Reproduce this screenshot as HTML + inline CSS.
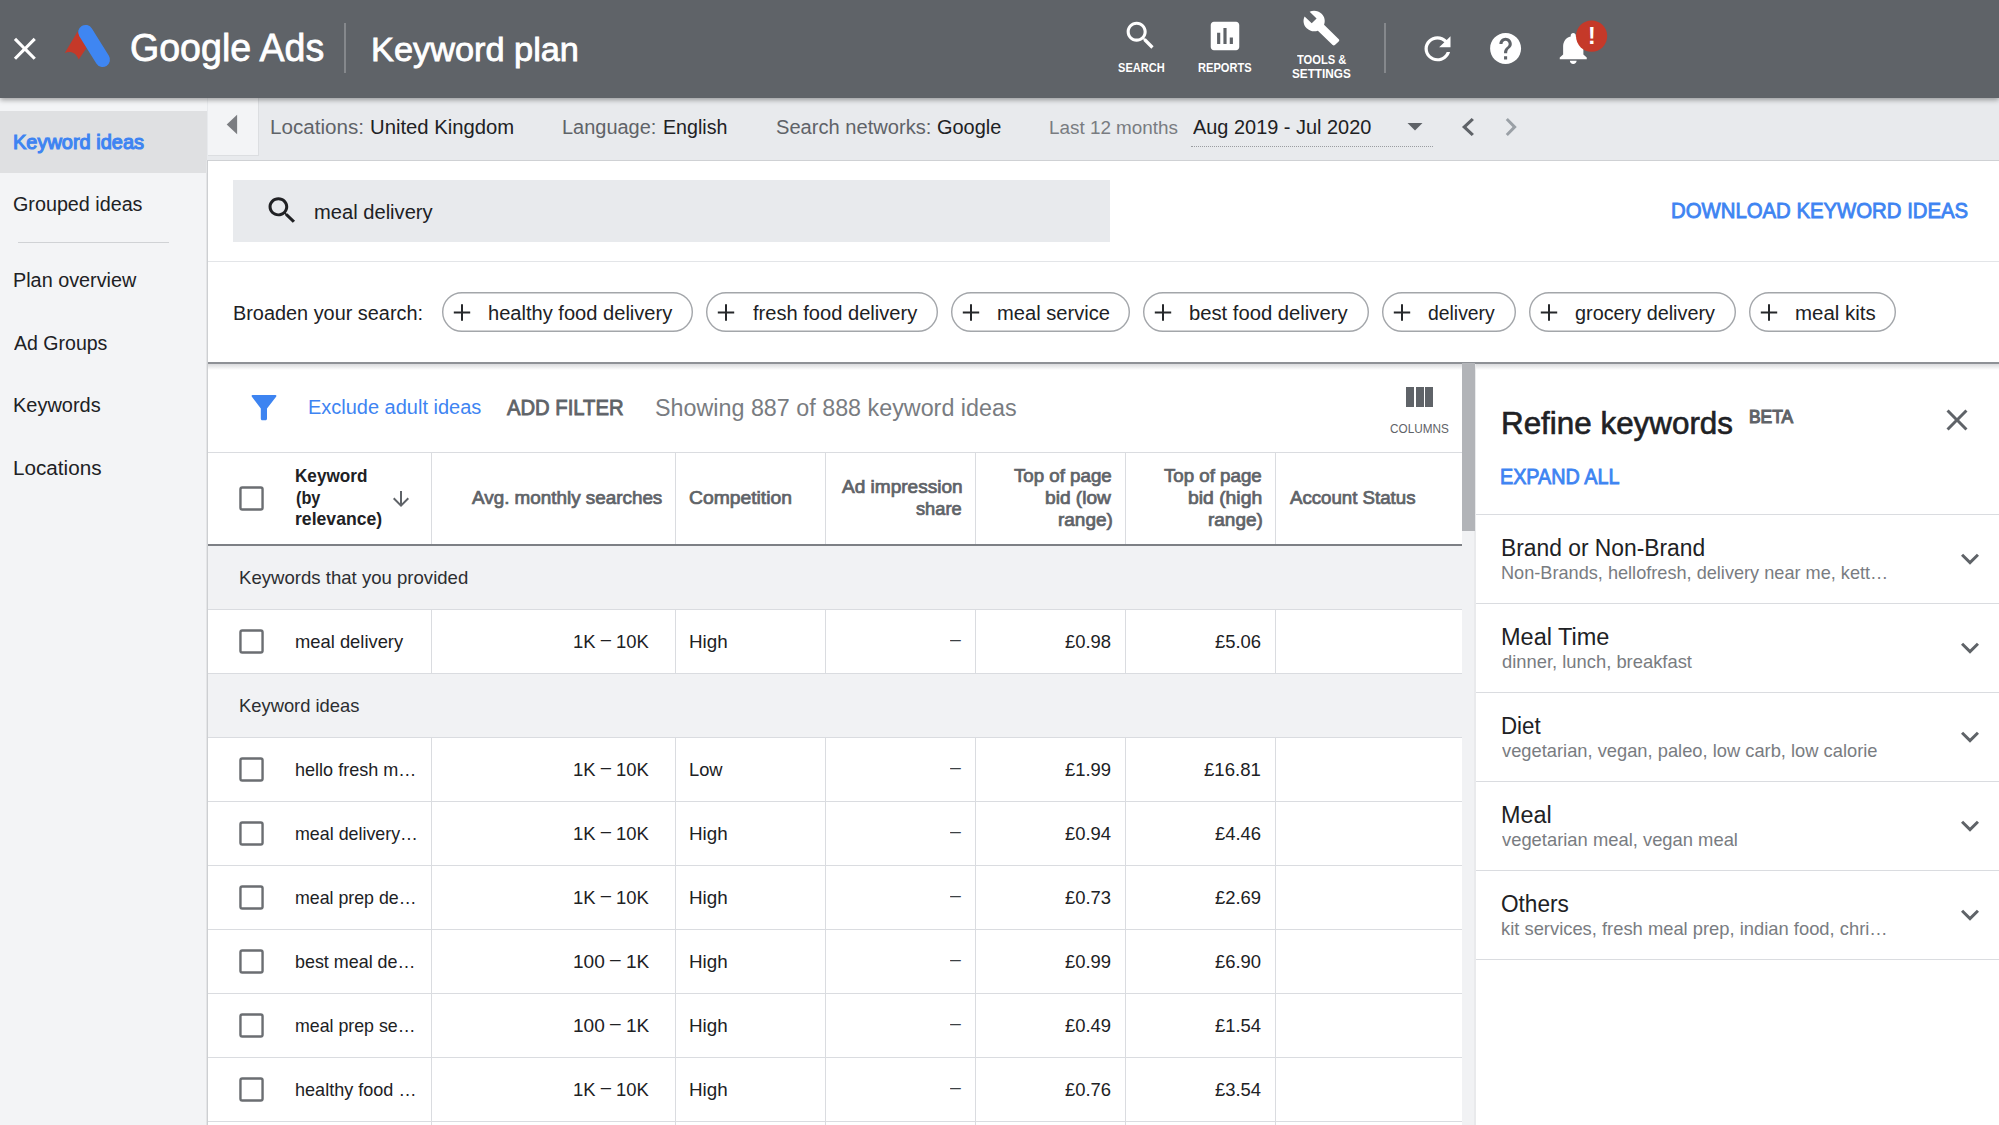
<!DOCTYPE html>
<html lang="en"><head><meta charset="utf-8"><title>Keyword plan - Google Ads</title>
<style>
*{margin:0;padding:0;box-sizing:border-box}
html,body{width:1999px;height:1125px;overflow:hidden;background:#fff}
body{position:relative;font-family:"Liberation Sans", Arial, sans-serif;-webkit-font-smoothing:antialiased}
.b{position:absolute}
.ic{position:absolute;overflow:visible}
.d{position:relative;top:-2.3px}
.t{position:absolute;white-space:nowrap;transform-origin:0 50%;color:#202124}
</style></head>
<body>
<div class="b" style="left:0px;top:0px;width:1999px;height:1125px;background:#ffffff;"></div>
<div class="b" style="left:0px;top:98px;width:207px;height:1027px;background:#f3f4f6;"></div>
<div class="b" style="left:0px;top:111px;width:207px;height:62px;background:#dfe0e2;"></div>
<div class="b" style="left:206px;top:160px;width:1px;height:965px;background:#e4e5e7;"></div>
<div class="b" style="left:207px;top:160px;width:1px;height:965px;background:#cdcfd2;"></div>
<div class="b" style="left:18px;top:242px;width:151px;height:1px;background:#d0d2d5;"></div>
<div class="b" style="left:207px;top:98px;width:1792px;height:62px;background:#e8eaed;border-bottom:1px solid #cfd1d4;box-sizing:content-box;"></div>
<div class="b" style="left:208px;top:98px;width:51px;height:58px;background:#f3f4f6;border-right:1px solid #dcdee1;border-bottom:1px solid #dcdee1;"></div>
<header class="b" style="left:0;top:0;width:1999px;height:98px;background:#5f6368;box-shadow:0 2px 5px rgba(0,0,0,.35)"></header>
<div class="b" style="left:233px;top:180px;width:877px;height:62px;background:#e8eaed;"></div>
<div class="b" style="left:208px;top:261px;width:1791px;height:1px;background:#e3e5e8;"></div>
<div class="b" style="left:208px;top:362px;width:1791px;height:2px;background:#8e9196;"></div>
<div class="b" style="left:208px;top:364px;width:1791px;height:6px;background:linear-gradient(#d9dadc,#ffffff)"></div>
<svg class="ic" style="left:6.14px;top:29.64px;width:37.71px;height:37.71px" viewBox="0 0 24 24" preserveAspectRatio="none"><path fill="#fff" d="M19 6.41L17.59 5 12 10.59 6.41 5 5 6.41 10.59 12 5 17.59 6.41 19 12 13.41 17.59 19 19 17.59 13.41 12z" /></svg>
<svg class="ic" style="left:60px;top:20px;width:56px;height:52px" viewBox="60 20 56 52"><path d="M77.6 31.6 L64.8 52.9 C70.5 50.6 76 52.6 78.7 59.4 L86.5 48 Z" fill="#c53929"/><line x1="85.6" y1="32.3" x2="102.6" y2="59.6" stroke="#3f86f2" stroke-width="14.8" stroke-linecap="round"/></svg>
<div class="b" style="left:344px;top:23px;width:2px;height:50px;background:#85888c;"></div>
<svg class="ic" style="left:1122.37px;top:17.37px;width:37.05px;height:37.05px" viewBox="0 0 24 24" preserveAspectRatio="none"><path fill="#fff" d="M15.5 14h-.79l-.28-.27C15.41 12.59 16 11.11 16 9.5 16 5.91 13.09 3 9.5 3S3 5.91 3 9.5 5.91 16 9.5 16c1.61 0 3.09-.59 4.23-1.57l.27.28v.79l5 4.99L20.49 19l-4.99-5zm-6 0C7.01 14 5 11.99 5 9.5S7.01 5 9.5 5 14 7.01 14 9.5 11.99 14 9.5 14z" /></svg>
<svg class="ic" style="left:1205.75px;top:16.75px;width:38.00px;height:38.00px" viewBox="0 0 24 24" preserveAspectRatio="none"><path fill="#fff" d="M19 3H5c-1.1 0-2 .9-2 2v14c0 1.1.9 2 2 2h14c1.1 0 2-.9 2-2V5c0-1.1-.9-2-2-2zM9 17H7v-7h2v7zm4 0h-2V7h2v10zm4 0h-2v-4h2v4z" /></svg>
<svg class="ic" style="left:1301.54px;top:8.91px;width:38.92px;height:38.18px" viewBox="0 0 24 24" preserveAspectRatio="none"><path fill="#fff" d="M22.7 19l-9.1-9.1c.9-2.3.4-5-1.5-6.9-2-2-5-2.4-7.4-1.3L9 6 6 9 1.6 4.7C.4 7.1.9 10.1 2.9 12.1c1.9 1.9 4.6 2.4 6.9 1.5l9.1 9.1c.4.4 1 .4 1.4 0l2.3-2.3c.5-.4.5-1.1.1-1.4z" /></svg>
<div class="b" style="left:1384px;top:23px;width:2px;height:50px;background:#85888c;"></div>
<svg class="ic" style="left:1417.50px;top:29.75px;width:39.00px;height:37.50px" viewBox="0 0 24 24" preserveAspectRatio="none"><path fill="#fff" d="M17.65 6.35C16.2 4.9 14.21 4 12 4c-4.42 0-7.99 3.58-7.99 8s3.57 8 7.99 8c3.73 0 6.84-2.55 7.73-6h-2.08c-.82 2.33-3.04 4-5.65 4-3.31 0-6-2.69-6-6s2.69-6 6-6c1.66 0 3.14.69 4.22 1.78L13 11h7V4l-2.35 2.35z" /></svg>
<svg class="ic" style="left:1486.90px;top:29.90px;width:37.20px;height:37.20px" viewBox="0 0 24 24" preserveAspectRatio="none"><path fill="#fff" d="M12 2C6.48 2 2 6.48 2 12s4.48 10 10 10 10-4.48 10-10S17.52 2 12 2zm1 17h-2v-2h2v2zm2.07-7.75l-.9.92C13.45 12.9 13 13.5 13 15h-2v-.5c0-1.1.45-2.1 1.17-2.83l1.24-1.26c.37-.36.59-.86.59-1.41 0-1.1-.9-2-2-2s-2 .9-2 2H8c0-2.21 1.79-4 4-4s4 1.79 4 4c0 .88-.36 1.68-.93 2.25z" /></svg>
<svg class="ic" style="left:1553.25px;top:29.03px;width:40.50px;height:38.15px" viewBox="0 0 24 24" preserveAspectRatio="none"><path fill="#fff" d="M12 22c1.1 0 2-.9 2-2h-4c0 1.1.89 2 2 2zm6-6v-5c0-3.07-1.64-5.64-4.5-6.32V4c0-.83-.67-1.5-1.5-1.5s-1.5.67-1.5 1.5v.68C7.63 5.36 6 7.92 6 11v5l-2 2v1h16v-1l-2-2z" /></svg>
<svg class="ic" style="left:1574px;top:18px;width:36px;height:36px" viewBox="1574 18 36 36"><circle cx="1591.6" cy="36.1" r="15.6" fill="#c53929"/></svg>
<svg class="ic" style="left:208.08px;top:101.48px;width:49.92px;height:47.04px" viewBox="0 0 24 24" preserveAspectRatio="none"><path fill="#7b7d81" d="M14 7l-5 5 5 5V7z" /></svg>
<div class="b" style="left:1191px;top:146px;width:242px;height:0;border-top:1px dotted #9a9da1"></div>
<svg class="ic" style="left:1397.00px;top:108.00px;width:36.00px;height:36.00px" viewBox="0 0 24 24" preserveAspectRatio="none"><path fill="#5f6368" d="M7 10l5 5 5-5z" /></svg>
<svg class="ic" style="left:1449.04px;top:108.50px;width:38.87px;height:36.00px" viewBox="0 0 24 24" preserveAspectRatio="none"><path fill="#5f6368" d="M15.41 7.41L14 6l-6 6 6 6 1.41-1.41L10.83 12z" /></svg>
<svg class="ic" style="left:1493.25px;top:108.50px;width:35.63px;height:36.00px" viewBox="0 0 24 24" preserveAspectRatio="none"><path fill="#9aa0a6" d="M10 6L8.59 7.41 13.17 12l-4.58 4.59L10 18l6-6z" /></svg>
<svg class="ic" style="left:264.45px;top:193.13px;width:36.36px;height:34.99px" viewBox="0 0 24 24" preserveAspectRatio="none"><path fill="#202124" d="M15.5 14h-.79l-.28-.27C15.41 12.59 16 11.11 16 9.5 16 5.91 13.09 3 9.5 3S3 5.91 3 9.5 5.91 16 9.5 16c1.61 0 3.09-.59 4.23-1.57l.27.28v.79l5 4.99L20.49 19l-4.99-5zm-6 0C7.01 14 5 11.99 5 9.5S7.01 5 9.5 5 14 7.01 14 9.5 11.99 14 9.5 14z" /></svg>
<svg class="ic" style="left:442px;top:292px;width:251px;height:40px" viewBox="0 0 251 40"><rect x="0.7" y="0.7" width="249.6" height="38.6" rx="19.3" fill="#fff" stroke="#a3a6aa" stroke-width="1.4"/><path d="M11.8 19.5h16.4v2H11.8zM19 12.3h2v16.4h-2z" fill="#26282b"/></svg>
<svg class="ic" style="left:706px;top:292px;width:232px;height:40px" viewBox="0 0 232 40"><rect x="0.7" y="0.7" width="230.6" height="38.6" rx="19.3" fill="#fff" stroke="#a3a6aa" stroke-width="1.4"/><path d="M11.8 19.5h16.4v2H11.8zM19 12.3h2v16.4h-2z" fill="#26282b"/></svg>
<svg class="ic" style="left:951px;top:292px;width:179px;height:40px" viewBox="0 0 179 40"><rect x="0.7" y="0.7" width="177.6" height="38.6" rx="19.3" fill="#fff" stroke="#a3a6aa" stroke-width="1.4"/><path d="M11.8 19.5h16.4v2H11.8zM19 12.3h2v16.4h-2z" fill="#26282b"/></svg>
<svg class="ic" style="left:1143px;top:292px;width:226px;height:40px" viewBox="0 0 226 40"><rect x="0.7" y="0.7" width="224.6" height="38.6" rx="19.3" fill="#fff" stroke="#a3a6aa" stroke-width="1.4"/><path d="M11.8 19.5h16.4v2H11.8zM19 12.3h2v16.4h-2z" fill="#26282b"/></svg>
<svg class="ic" style="left:1382px;top:292px;width:134px;height:40px" viewBox="0 0 134 40"><rect x="0.7" y="0.7" width="132.6" height="38.6" rx="19.3" fill="#fff" stroke="#a3a6aa" stroke-width="1.4"/><path d="M11.8 19.5h16.4v2H11.8zM19 12.3h2v16.4h-2z" fill="#26282b"/></svg>
<svg class="ic" style="left:1529px;top:292px;width:207px;height:40px" viewBox="0 0 207 40"><rect x="0.7" y="0.7" width="205.6" height="38.6" rx="19.3" fill="#fff" stroke="#a3a6aa" stroke-width="1.4"/><path d="M11.8 19.5h16.4v2H11.8zM19 12.3h2v16.4h-2z" fill="#26282b"/></svg>
<svg class="ic" style="left:1749px;top:292px;width:147px;height:40px" viewBox="0 0 147 40"><rect x="0.7" y="0.7" width="145.6" height="38.6" rx="19.3" fill="#fff" stroke="#a3a6aa" stroke-width="1.4"/><path d="M11.8 19.5h16.4v2H11.8zM19 12.3h2v16.4h-2z" fill="#26282b"/></svg>
<svg class="ic" style="left:249px;top:393px;width:30px;height:30px" viewBox="249 393 30 30"><path d="M252.6 395 H275.4 C276.4 395 276.7 395.9 276.1 396.7 L267 408.6 V418.4 C267 419.6 266.2 420.3 265.2 420.3 H262.6 C261.6 420.3 260.8 419.6 260.8 418.4 V408.6 L251.9 396.7 C251.3 395.9 251.6 395 252.6 395 Z" fill="#3d84f1"/></svg>
<div class="b" style="left:1406.0px;top:387px;width:8.0px;height:20px;background:#5f6368;"></div>
<div class="b" style="left:1415.5px;top:387px;width:8.0px;height:20px;background:#5f6368;"></div>
<div class="b" style="left:1425.0px;top:387px;width:8.0px;height:20px;background:#5f6368;"></div>
<div class="b" style="left:208px;top:452px;width:1254px;height:1px;background:#dadce0;"></div>
<div class="b" style="left:208px;top:544px;width:1254px;height:2px;background:#7d8085;"></div>
<div class="b" style="left:208px;top:546px;width:1254px;height:63px;background:#f1f2f4;"></div>
<div class="b" style="left:208px;top:674px;width:1254px;height:63px;background:#f1f2f4;"></div>
<div class="b" style="left:208px;top:609px;width:1254px;height:1px;background:#dadce0;"></div>
<div class="b" style="left:208px;top:673px;width:1254px;height:1px;background:#dadce0;"></div>
<div class="b" style="left:208px;top:737px;width:1254px;height:1px;background:#dadce0;"></div>
<div class="b" style="left:208px;top:801px;width:1254px;height:1px;background:#dadce0;"></div>
<div class="b" style="left:208px;top:865px;width:1254px;height:1px;background:#dadce0;"></div>
<div class="b" style="left:208px;top:929px;width:1254px;height:1px;background:#dadce0;"></div>
<div class="b" style="left:208px;top:993px;width:1254px;height:1px;background:#dadce0;"></div>
<div class="b" style="left:208px;top:1057px;width:1254px;height:1px;background:#dadce0;"></div>
<div class="b" style="left:208px;top:1121px;width:1254px;height:1px;background:#dadce0;"></div>
<div class="b" style="left:1462px;top:364px;width:14px;height:761px;background:#f1f2f4;"></div>
<div class="b" style="left:1474px;top:364px;width:2px;height:761px;background:#e9eaec;"></div>
<div class="b" style="left:1462px;top:363px;width:13px;height:168px;background:#b2b4b8;"></div>
<div class="b" style="left:431px;top:453px;width:1px;height:91px;background:#dadce0;"></div>
<div class="b" style="left:431px;top:610px;width:1px;height:63px;background:#dadce0;"></div>
<div class="b" style="left:431px;top:738px;width:1px;height:387px;background:#dadce0;"></div>
<div class="b" style="left:675px;top:453px;width:1px;height:91px;background:#dadce0;"></div>
<div class="b" style="left:675px;top:610px;width:1px;height:63px;background:#dadce0;"></div>
<div class="b" style="left:675px;top:738px;width:1px;height:387px;background:#dadce0;"></div>
<div class="b" style="left:825px;top:453px;width:1px;height:91px;background:#dadce0;"></div>
<div class="b" style="left:825px;top:610px;width:1px;height:63px;background:#dadce0;"></div>
<div class="b" style="left:825px;top:738px;width:1px;height:387px;background:#dadce0;"></div>
<div class="b" style="left:975px;top:453px;width:1px;height:91px;background:#dadce0;"></div>
<div class="b" style="left:975px;top:610px;width:1px;height:63px;background:#dadce0;"></div>
<div class="b" style="left:975px;top:738px;width:1px;height:387px;background:#dadce0;"></div>
<div class="b" style="left:1125px;top:453px;width:1px;height:91px;background:#dadce0;"></div>
<div class="b" style="left:1125px;top:610px;width:1px;height:63px;background:#dadce0;"></div>
<div class="b" style="left:1125px;top:738px;width:1px;height:387px;background:#dadce0;"></div>
<div class="b" style="left:1275px;top:453px;width:1px;height:91px;background:#dadce0;"></div>
<div class="b" style="left:1275px;top:610px;width:1px;height:63px;background:#dadce0;"></div>
<div class="b" style="left:1275px;top:738px;width:1px;height:387px;background:#dadce0;"></div>
<svg class="ic" style="left:239px;top:485.5px;width:25px;height:25px" viewBox="0 0 25 25"><rect x="1.45" y="1.45" width="22.1" height="22.1" rx="1.8" fill="#fff" stroke="#6b6e72" stroke-width="2.4"/></svg>
<svg class="ic" style="left:389.00px;top:487.00px;width:24.00px;height:24.00px" viewBox="0 0 24 24" preserveAspectRatio="none"><path fill="#5f6368" d="M20 12l-1.41-1.41L13 16.17V4h-2v12.17l-5.58-5.59L4 12l8 8 8-8z" /></svg>
<svg class="ic" style="left:239px;top:629.2px;width:25px;height:25px" viewBox="0 0 25 25"><rect x="1.45" y="1.45" width="22.1" height="22.1" rx="1.8" fill="#fff" stroke="#6b6e72" stroke-width="2.4"/></svg>
<svg class="ic" style="left:239px;top:757.2px;width:25px;height:25px" viewBox="0 0 25 25"><rect x="1.45" y="1.45" width="22.1" height="22.1" rx="1.8" fill="#fff" stroke="#6b6e72" stroke-width="2.4"/></svg>
<svg class="ic" style="left:239px;top:821.2px;width:25px;height:25px" viewBox="0 0 25 25"><rect x="1.45" y="1.45" width="22.1" height="22.1" rx="1.8" fill="#fff" stroke="#6b6e72" stroke-width="2.4"/></svg>
<svg class="ic" style="left:239px;top:885.2px;width:25px;height:25px" viewBox="0 0 25 25"><rect x="1.45" y="1.45" width="22.1" height="22.1" rx="1.8" fill="#fff" stroke="#6b6e72" stroke-width="2.4"/></svg>
<svg class="ic" style="left:239px;top:949.2px;width:25px;height:25px" viewBox="0 0 25 25"><rect x="1.45" y="1.45" width="22.1" height="22.1" rx="1.8" fill="#fff" stroke="#6b6e72" stroke-width="2.4"/></svg>
<svg class="ic" style="left:239px;top:1013.2px;width:25px;height:25px" viewBox="0 0 25 25"><rect x="1.45" y="1.45" width="22.1" height="22.1" rx="1.8" fill="#fff" stroke="#6b6e72" stroke-width="2.4"/></svg>
<svg class="ic" style="left:239px;top:1077.2px;width:25px;height:25px" viewBox="0 0 25 25"><rect x="1.45" y="1.45" width="22.1" height="22.1" rx="1.8" fill="#fff" stroke="#6b6e72" stroke-width="2.4"/></svg>
<svg class="ic" style="left:1939.00px;top:402.00px;width:36.00px;height:36.00px" viewBox="0 0 24 24" preserveAspectRatio="none"><path fill="#5f6368" d="M19 6.41L17.59 5 12 10.59 6.41 5 5 6.41 10.59 12 5 17.59 6.41 19 12 13.41 17.59 19 19 17.59 13.41 12z" /></svg>
<div class="b" style="left:1476px;top:514px;width:523px;height:1px;background:#dadce0;"></div>
<svg class="ic" style="left:1952.00px;top:541.25px;width:36.00px;height:35.63px" viewBox="0 0 24 24" preserveAspectRatio="none"><path fill="#5f6368" d="M16.59 8.59L12 13.17 7.41 8.59 6 10l6 6 6-6z" /></svg>
<div class="b" style="left:1476px;top:603px;width:523px;height:1px;background:#dadce0;"></div>
<svg class="ic" style="left:1952.00px;top:630.15px;width:36.00px;height:35.63px" viewBox="0 0 24 24" preserveAspectRatio="none"><path fill="#5f6368" d="M16.59 8.59L12 13.17 7.41 8.59 6 10l6 6 6-6z" /></svg>
<div class="b" style="left:1476px;top:692px;width:523px;height:1px;background:#dadce0;"></div>
<svg class="ic" style="left:1952.00px;top:719.05px;width:36.00px;height:35.63px" viewBox="0 0 24 24" preserveAspectRatio="none"><path fill="#5f6368" d="M16.59 8.59L12 13.17 7.41 8.59 6 10l6 6 6-6z" /></svg>
<div class="b" style="left:1476px;top:781px;width:523px;height:1px;background:#dadce0;"></div>
<svg class="ic" style="left:1952.00px;top:807.95px;width:36.00px;height:35.63px" viewBox="0 0 24 24" preserveAspectRatio="none"><path fill="#5f6368" d="M16.59 8.59L12 13.17 7.41 8.59 6 10l6 6 6-6z" /></svg>
<div class="b" style="left:1476px;top:870px;width:523px;height:1px;background:#dadce0;"></div>
<svg class="ic" style="left:1952.00px;top:896.85px;width:36.00px;height:35.63px" viewBox="0 0 24 24" preserveAspectRatio="none"><path fill="#5f6368" d="M16.59 8.59L12 13.17 7.41 8.59 6 10l6 6 6-6z" /></svg>
<div class="b" style="left:1476px;top:959px;width:523px;height:1px;background:#dadce0;"></div>
<div class="t" id="h_google" style="left:130.41px;top:24.33px;font-size:38px;line-height:49px;color:#fff;-webkit-text-stroke:0.76px #fff;transform:scaleX(0.9887);">Google Ads</div>
<div class="t" id="h_kp" style="left:371.38px;top:27.32px;font-size:33.7px;line-height:44px;color:#fff;-webkit-text-stroke:0.81px #fff;transform:scaleX(1.0188);">Keyword plan</div>
<div class="t" id="h_search" style="left:1118.00px;top:59.30px;font-size:13px;line-height:17px;font-weight:700;color:#fff;transform:scaleX(0.8509);">SEARCH</div>
<div class="t" id="h_reports" style="left:1198.00px;top:59.30px;font-size:13px;line-height:17px;font-weight:700;color:#fff;transform:scaleX(0.8540);">REPORTS</div>
<div class="t" id="h_tools" style="left:1296.93px;top:51.30px;font-size:13px;line-height:17px;font-weight:700;color:#fff;transform:scaleX(0.8586);">TOOLS &amp;</div>
<div class="t" id="h_settings" style="left:1292.00px;top:65.30px;font-size:13px;line-height:17px;font-weight:700;color:#fff;transform:scaleX(0.9046);">SETTINGS</div>
<div class="t" id="h_bang" style="left:1587.90px;top:21.13px;font-size:23px;line-height:30px;font-weight:700;color:#fff;">!</div>
<div class="t" id="s_ki" style="left:13.40px;top:128.57px;font-size:20px;line-height:26px;color:#3e84f2;-webkit-text-stroke:1.12px #3e84f2;transform:scaleX(0.9985);">Keyword ideas</div>
<div class="t" id="s_gi" style="left:13.01px;top:191.07px;font-size:20px;line-height:26px;transform:scaleX(0.9869);">Grouped ideas</div>
<div class="t" id="s_po" style="left:13.01px;top:267.07px;font-size:20px;line-height:26px;transform:scaleX(0.9903);">Plan overview</div>
<div class="t" id="s_ag" style="left:14.00px;top:329.57px;font-size:20px;line-height:26px;transform:scaleX(0.9768);">Ad Groups</div>
<div class="t" id="s_kw" style="left:13.00px;top:392.07px;font-size:20px;line-height:26px;transform:scaleX(0.9977);">Keywords</div>
<div class="t" id="s_lo" style="left:12.97px;top:454.57px;font-size:20px;line-height:26px;transform:scaleX(1.0333);">Locations</div>
<div class="t" id="tb_loc" style="left:269.97px;top:114.07px;font-size:20px;line-height:26px;color:#5f6368;transform:scaleX(1.0315);">Locations:</div>
<div class="t" id="tb_uk" style="left:369.99px;top:114.07px;font-size:20px;line-height:26px;transform:scaleX(1.0128);">United Kingdom</div>
<div class="t" id="tb_lang" style="left:562.00px;top:114.07px;font-size:20px;line-height:26px;color:#5f6368;transform:scaleX(0.9978);">Language:</div>
<div class="t" id="tb_en" style="left:663.02px;top:114.07px;font-size:20px;line-height:26px;transform:scaleX(0.9812);">English</div>
<div class="t" id="tb_sn" style="left:775.99px;top:114.07px;font-size:20px;line-height:26px;color:#5f6368;transform:scaleX(1.0053);">Search networks:</div>
<div class="t" id="tb_g" style="left:937.00px;top:114.07px;font-size:20px;line-height:26px;transform:scaleX(0.9968);">Google</div>
<div class="t" id="tb_l12" style="left:1049.02px;top:114.85px;font-size:19.2px;line-height:25px;color:#797c81;transform:scaleX(0.9831);">Last 12 months</div>
<div class="t" id="tb_date" style="left:1193.00px;top:113.40px;font-size:20.5px;line-height:27px;transform:scaleX(0.9716);">Aug 2019 - Jul 2020</div>
<div class="t" id="q" style="left:313.99px;top:199.07px;font-size:20px;line-height:26px;transform:scaleX(1.0068);">meal delivery</div>
<div class="t" id="dl" style="left:1670.50px;top:196.48px;font-size:22px;line-height:29px;color:#3e84f2;-webkit-text-stroke:0.88px #3e84f2;transform:scaleX(0.9244);">DOWNLOAD KEYWORD IDEAS</div>
<div class="t" id="br" style="left:233.01px;top:300.07px;font-size:20px;line-height:26px;transform:scaleX(0.9937);">Broaden your search:</div>
<div class="t" id="chip0" style="left:488.00px;top:300.07px;font-size:20px;line-height:26px;transform:scaleX(1.0044);">healthy food delivery</div>
<div class="t" id="chip1" style="left:753.00px;top:300.07px;font-size:20px;line-height:26px;transform:scaleX(1.0049);">fresh food delivery</div>
<div class="t" id="chip2" style="left:997.00px;top:300.07px;font-size:20px;line-height:26px;transform:scaleX(1.0072);">meal service</div>
<div class="t" id="chip3" style="left:1188.99px;top:300.07px;font-size:20px;line-height:26px;transform:scaleX(1.0115);">best food delivery</div>
<div class="t" id="chip4" style="left:1428.02px;top:300.07px;font-size:20px;line-height:26px;transform:scaleX(0.9681);">delivery</div>
<div class="t" id="chip5" style="left:1575.00px;top:300.07px;font-size:20px;line-height:26px;transform:scaleX(0.9915);">grocery delivery</div>
<div class="t" id="chip6" style="left:1794.99px;top:300.07px;font-size:20px;line-height:26px;transform:scaleX(1.0231);">meal kits</div>
<div class="t" id="f_ex" style="left:308.00px;top:393.67px;font-size:20px;line-height:26px;color:#3e84f2;transform:scaleX(0.9988);">Exclude adult ideas</div>
<div class="t" id="f_add" style="left:507.34px;top:392.68px;font-size:22px;line-height:29px;color:#5f6368;-webkit-text-stroke:0.88px #5f6368;transform:scaleX(0.9197);">ADD FILTER</div>
<div class="t" id="f_show" style="left:654.99px;top:392.53px;font-size:23px;line-height:30px;color:#797c81;transform:scaleX(1.0135);">Showing 887 of 888 keyword ideas</div>
<div class="t" id="f_cols" style="left:1390.00px;top:420.29px;font-size:13.6px;line-height:18px;color:#5f6368;transform:scaleX(0.8647);">COLUMNS</div>
<div class="t" id="th_k1" style="left:295.07px;top:463.62px;font-size:18.4px;line-height:24px;font-weight:700;transform:scaleX(0.9316);">Keyword</div>
<div class="t" id="th_k2" style="left:296.00px;top:485.62px;font-size:18.4px;line-height:24px;font-weight:700;transform:scaleX(0.8857);">(by</div>
<div class="t" id="th_k3" style="left:295.04px;top:507.12px;font-size:18.4px;line-height:24px;font-weight:700;transform:scaleX(0.9584);">relevance)</div>
<div class="t" id="th_avg" style="left:471.81px;top:486.02px;font-size:18.4px;line-height:24px;color:#5f6368;-webkit-text-stroke:0.74px #5f6368;transform:scaleX(1.0247);">Avg. monthly searches</div>
<div class="t" id="th_comp" style="left:689.39px;top:486.02px;font-size:18.4px;line-height:24px;color:#5f6368;-webkit-text-stroke:0.74px #5f6368;transform:scaleX(1.0495);">Competition</div>
<div class="t" id="th_ad1" style="left:841.83px;top:474.62px;font-size:18.4px;line-height:24px;color:#5f6368;-webkit-text-stroke:0.74px #5f6368;transform:scaleX(1.0350);">Ad impression</div>
<div class="t" id="th_ad2" style="left:915.80px;top:496.62px;font-size:18.4px;line-height:24px;color:#5f6368;-webkit-text-stroke:0.74px #5f6368;transform:scaleX(0.9915);">share</div>
<div class="t" id="th_lo1" style="left:1013.81px;top:464.12px;font-size:18.4px;line-height:24px;color:#5f6368;-webkit-text-stroke:0.74px #5f6368;transform:scaleX(1.0165);">Top of page</div>
<div class="t" id="th_lo2" style="left:1044.78px;top:486.12px;font-size:18.4px;line-height:24px;color:#5f6368;-webkit-text-stroke:0.74px #5f6368;transform:scaleX(1.0406);">bid (low</div>
<div class="t" id="th_lo3" style="left:1057.78px;top:507.92px;font-size:18.4px;line-height:24px;color:#5f6368;-webkit-text-stroke:0.74px #5f6368;transform:scaleX(1.0308);">range)</div>
<div class="t" id="th_hi1" style="left:1163.81px;top:464.12px;font-size:18.4px;line-height:24px;color:#5f6368;-webkit-text-stroke:0.74px #5f6368;transform:scaleX(1.0165);">Top of page</div>
<div class="t" id="th_hi2" style="left:1187.77px;top:486.12px;font-size:18.4px;line-height:24px;color:#5f6368;-webkit-text-stroke:0.74px #5f6368;transform:scaleX(1.0514);">bid (high</div>
<div class="t" id="th_hi3" style="left:1207.78px;top:507.92px;font-size:18.4px;line-height:24px;color:#5f6368;-webkit-text-stroke:0.74px #5f6368;transform:scaleX(1.0308);">range)</div>
<div class="t" id="th_acc" style="left:1290.41px;top:486.02px;font-size:18.4px;line-height:24px;color:#5f6368;-webkit-text-stroke:0.74px #5f6368;transform:scaleX(1.0144);">Account Status</div>
<div class="t" id="g1" style="left:238.98px;top:565.62px;font-size:18.4px;line-height:24px;color:#2c2e31;transform:scaleX(1.0102);">Keywords that you provided</div>
<div class="t" id="g2" style="left:239.00px;top:693.62px;font-size:18.4px;line-height:24px;color:#2c2e31;transform:scaleX(0.9983);">Keyword ideas</div>
<div class="t" id="r0k" style="left:295.00px;top:629.62px;font-size:18.4px;line-height:24px;transform:scaleX(0.9981);">meal delivery</div>
<div class="t" id="r0v" style="left:573.40px;top:629.62px;font-size:18.4px;line-height:24px;transform:scaleX(1.0013);">1K <span class="d">–</span> 10K</div>
<div class="t" id="r0c" style="left:688.98px;top:629.62px;font-size:18.4px;line-height:24px;transform:scaleX(1.0222);">High</div>
<div class="t" id="r0d" style="left:950.03px;top:627.32px;font-size:18.4px;line-height:24px;color:#3c4043;transform:scaleX(1.0545);">–</div>
<div class="t" id="r0l" style="left:1065.40px;top:629.62px;font-size:18.4px;line-height:24px;transform:scaleX(1.0022);">£0.98</div>
<div class="t" id="r0h" style="left:1215.40px;top:629.62px;font-size:18.4px;line-height:24px;transform:scaleX(1.0022);">£5.06</div>
<div class="t" id="r1k" style="left:295.02px;top:757.62px;font-size:18.4px;line-height:24px;transform:scaleX(0.9818);">hello fresh m…</div>
<div class="t" id="r1v" style="left:573.40px;top:757.62px;font-size:18.4px;line-height:24px;transform:scaleX(1.0013);">1K <span class="d">–</span> 10K</div>
<div class="t" id="r1c" style="left:689.01px;top:757.62px;font-size:18.4px;line-height:24px;transform:scaleX(0.9939);">Low</div>
<div class="t" id="r1d" style="left:950.03px;top:755.32px;font-size:18.4px;line-height:24px;color:#3c4043;transform:scaleX(1.0545);">–</div>
<div class="t" id="r1l" style="left:1065.40px;top:757.62px;font-size:18.4px;line-height:24px;transform:scaleX(1.0022);">£1.99</div>
<div class="t" id="r1h" style="left:1203.99px;top:757.62px;font-size:18.4px;line-height:24px;transform:scaleX(1.0109);">£16.81</div>
<div class="t" id="r2k" style="left:295.03px;top:821.62px;font-size:18.4px;line-height:24px;transform:scaleX(0.9702);">meal delivery…</div>
<div class="t" id="r2v" style="left:573.40px;top:821.62px;font-size:18.4px;line-height:24px;transform:scaleX(1.0013);">1K <span class="d">–</span> 10K</div>
<div class="t" id="r2c" style="left:688.98px;top:821.62px;font-size:18.4px;line-height:24px;transform:scaleX(1.0222);">High</div>
<div class="t" id="r2d" style="left:950.03px;top:819.32px;font-size:18.4px;line-height:24px;color:#3c4043;transform:scaleX(1.0545);">–</div>
<div class="t" id="r2l" style="left:1065.40px;top:821.62px;font-size:18.4px;line-height:24px;transform:scaleX(1.0022);">£0.94</div>
<div class="t" id="r2h" style="left:1215.40px;top:821.62px;font-size:18.4px;line-height:24px;transform:scaleX(1.0022);">£4.46</div>
<div class="t" id="r3k" style="left:295.03px;top:885.62px;font-size:18.4px;line-height:24px;transform:scaleX(0.9659);">meal prep de…</div>
<div class="t" id="r3v" style="left:573.40px;top:885.62px;font-size:18.4px;line-height:24px;transform:scaleX(1.0013);">1K <span class="d">–</span> 10K</div>
<div class="t" id="r3c" style="left:688.98px;top:885.62px;font-size:18.4px;line-height:24px;transform:scaleX(1.0222);">High</div>
<div class="t" id="r3d" style="left:950.03px;top:883.32px;font-size:18.4px;line-height:24px;color:#3c4043;transform:scaleX(1.0545);">–</div>
<div class="t" id="r3l" style="left:1065.40px;top:885.62px;font-size:18.4px;line-height:24px;transform:scaleX(1.0022);">£0.73</div>
<div class="t" id="r3h" style="left:1215.40px;top:885.62px;font-size:18.4px;line-height:24px;transform:scaleX(1.0022);">£2.69</div>
<div class="t" id="r4k" style="left:295.03px;top:949.62px;font-size:18.4px;line-height:24px;transform:scaleX(0.9736);">best meal de…</div>
<div class="t" id="r4v" style="left:573.35px;top:949.62px;font-size:18.4px;line-height:24px;transform:scaleX(1.0361);">100 <span class="d">–</span> 1K</div>
<div class="t" id="r4c" style="left:688.98px;top:949.62px;font-size:18.4px;line-height:24px;transform:scaleX(1.0222);">High</div>
<div class="t" id="r4d" style="left:950.03px;top:947.32px;font-size:18.4px;line-height:24px;color:#3c4043;transform:scaleX(1.0545);">–</div>
<div class="t" id="r4l" style="left:1065.40px;top:949.62px;font-size:18.4px;line-height:24px;transform:scaleX(1.0022);">£0.99</div>
<div class="t" id="r4h" style="left:1215.40px;top:949.62px;font-size:18.4px;line-height:24px;transform:scaleX(1.0022);">£6.90</div>
<div class="t" id="r5k" style="left:295.03px;top:1013.62px;font-size:18.4px;line-height:24px;transform:scaleX(0.9656);">meal prep se…</div>
<div class="t" id="r5v" style="left:573.35px;top:1013.62px;font-size:18.4px;line-height:24px;transform:scaleX(1.0361);">100 <span class="d">–</span> 1K</div>
<div class="t" id="r5c" style="left:688.98px;top:1013.62px;font-size:18.4px;line-height:24px;transform:scaleX(1.0222);">High</div>
<div class="t" id="r5d" style="left:950.03px;top:1011.32px;font-size:18.4px;line-height:24px;color:#3c4043;transform:scaleX(1.0545);">–</div>
<div class="t" id="r5l" style="left:1065.40px;top:1013.62px;font-size:18.4px;line-height:24px;transform:scaleX(1.0022);">£0.49</div>
<div class="t" id="r5h" style="left:1215.40px;top:1013.62px;font-size:18.4px;line-height:24px;transform:scaleX(1.0022);">£1.54</div>
<div class="t" id="r6k" style="left:295.02px;top:1077.62px;font-size:18.4px;line-height:24px;transform:scaleX(0.9818);">healthy food …</div>
<div class="t" id="r6v" style="left:573.40px;top:1077.62px;font-size:18.4px;line-height:24px;transform:scaleX(1.0013);">1K <span class="d">–</span> 10K</div>
<div class="t" id="r6c" style="left:688.98px;top:1077.62px;font-size:18.4px;line-height:24px;transform:scaleX(1.0222);">High</div>
<div class="t" id="r6d" style="left:950.03px;top:1075.32px;font-size:18.4px;line-height:24px;color:#3c4043;transform:scaleX(1.0545);">–</div>
<div class="t" id="r6l" style="left:1065.40px;top:1077.62px;font-size:18.4px;line-height:24px;transform:scaleX(1.0022);">£0.76</div>
<div class="t" id="r6h" style="left:1215.40px;top:1077.62px;font-size:18.4px;line-height:24px;transform:scaleX(1.0022);">£3.54</div>
<div class="t" id="p_title" style="left:1501.37px;top:403.40px;font-size:30.6px;line-height:40px;-webkit-text-stroke:0.61px #202124;transform:scaleX(1.0258);">Refine keywords</div>
<div class="t" id="p_beta" style="left:1749.42px;top:405.06px;font-size:18.6px;line-height:24px;color:#5f6368;-webkit-text-stroke:1.19px #5f6368;transform:scaleX(0.9333);">BETA</div>
<div class="t" id="p_exp" style="left:1499.52px;top:463.25px;font-size:21.8px;line-height:28px;color:#3e84f2;-webkit-text-stroke:0.87px #3e84f2;transform:scaleX(0.9069);">EXPAND ALL</div>
<div class="t" id="p0a" style="left:1501.01px;top:533.03px;font-size:23px;line-height:30px;transform:scaleX(0.9917);">Brand or Non-Brand</div>
<div class="t" id="p0s" style="left:1501.01px;top:560.92px;font-size:18.4px;line-height:24px;color:#797c81;transform:scaleX(0.9866);">Non-Brands, hellofresh, delivery near me, kett…</div>
<div class="t" id="p1a" style="left:1500.98px;top:621.93px;font-size:23px;line-height:30px;transform:scaleX(1.0219);">Meal Time</div>
<div class="t" id="p1s" style="left:1502.00px;top:649.82px;font-size:18.4px;line-height:24px;color:#797c81;transform:scaleX(0.9989);">dinner, lunch, breakfast</div>
<div class="t" id="p2a" style="left:1501.03px;top:710.83px;font-size:23px;line-height:30px;transform:scaleX(0.9700);">Diet</div>
<div class="t" id="p2s" style="left:1502.00px;top:738.72px;font-size:18.4px;line-height:24px;color:#797c81;transform:scaleX(0.9955);">vegetarian, vegan, paleo, low carb, low calorie</div>
<div class="t" id="p3a" style="left:1500.98px;top:799.73px;font-size:23px;line-height:30px;transform:scaleX(1.0167);">Meal</div>
<div class="t" id="p3s" style="left:1502.00px;top:827.62px;font-size:18.4px;line-height:24px;color:#797c81;transform:scaleX(0.9991);">vegetarian meal, vegan meal</div>
<div class="t" id="p4a" style="left:1501.02px;top:888.63px;font-size:23px;line-height:30px;transform:scaleX(0.9824);">Others</div>
<div class="t" id="p4s" style="left:1501.00px;top:916.52px;font-size:18.4px;line-height:24px;color:#797c81;transform:scaleX(0.9982);">kit services, fresh meal prep, indian food, chri…</div>
</body></html>
